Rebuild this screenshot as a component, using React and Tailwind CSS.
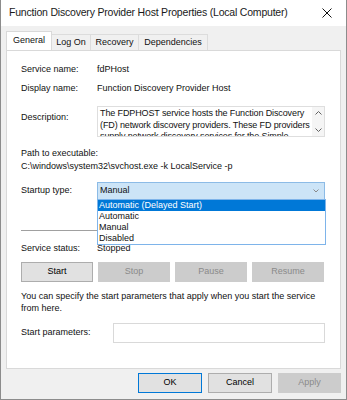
import React from "react";

const font = "font-['Liberation_Sans',Arial,sans-serif]";

function Tab({ label, active, w }) {
  if (active) {
    return (
      <div className={`relative z-10 h-[19px] -mb-px flex items-center justify-center bg-white border border-[#d9d9d9] border-b-0 ${w}`}>
        <span className="-mt-[1px]">{label}</span>
      </div>
    );
  }
  return (
    <div className={`h-[16px] mt-[3px] flex items-center justify-center bg-[#f0f0f0] border border-[#dcdcdc] border-b-0 -ml-px ${w}`}>
      {label}
    </div>
  );
}

function Btn({ label, disabled, primary, w = "w-[72px]" }) {
  let cls = "bg-[#e1e1e1] border-[#adadad] text-black";
  if (disabled) cls = "bg-[#cccccc] border-[#cccccc] text-[#8a8a8a]";
  if (primary) cls = "bg-[#e1e1e1] border-[#0078d7] text-black";
  return (
    <div className={`h-[20px] ${w} border flex items-center justify-center ${cls}`}>
      {label}
    </div>
  );
}

export default function App() {
  return (
    <div className={`w-[347px] h-[400px] bg-[#f0f0f0] border border-[#8c8c8c] border-t-0 flex flex-col text-[9px] text-[#111] whitespace-nowrap ${font} overflow-hidden`}>
      {/* title bar */}
      <div className="h-[26px] bg-white flex items-center pl-[8px] pr-[10px] shrink-0 text-[10.5px] tracking-[-0.2px]">
        <span className="flex-1 text-[#1a1a1a]">
          Function Discovery Provider Host Properties (Local Computer)
        </span>
        <svg width="10" height="10" viewBox="0 0 10 10" className="mr-[4px]">
          <path d="M0.5 0.5L9.5 9.5M9.5 0.5L0.5 9.5" stroke="#111" strokeWidth="1" />
        </svg>
      </div>

      {/* tabs */}
      <div className="flex items-start pl-[5px] mt-[5px] h-[19px] shrink-0">
        <Tab label="General" active w="w-[46px]" />
        <Tab label="Log On" w="w-[40px]" />
        <Tab label="Recovery" w="w-[49px]" />
        <Tab label="Dependencies" w="w-[70px]" />
      </div>

      {/* panel */}
      <div className="relative mx-[5px] h-[319px] bg-white border border-[#d9d9d9] pl-[14px] pr-[15px] shrink-0">
        <div className="mt-[11px] h-[16px] flex items-center">
          <span className="w-[76px]">Service name:</span>
          <span>fdPHost</span>
        </div>
        <div className="mt-[3px] h-[16px] flex items-center">
          <span className="w-[76px]">Display name:</span>
          <span>Function Discovery Provider Host</span>
        </div>
        <div className="mt-[9px] flex items-start">
          <span className="w-[76px] pt-[5px]">Description:</span>
          <div className="flex-1 min-w-0 h-[31px] border border-[#dedede] flex overflow-hidden">
            <div className="flex-1 min-w-0 pl-[2px] leading-[11.5px] pt-[1px] overflow-hidden tracking-[-0.12px]">
              <div>The FDPHOST service hosts the Function Discovery</div>
              <div>(FD) network discovery providers. These FD providers</div>
              <div>supply network discovery services for the Simple</div>
            </div>
            <div className="w-[12px] shrink-0 flex flex-col items-center justify-between py-[4px] bg-[#f5f5f5]">
              <svg width="7" height="4" viewBox="0 0 7 4">
                <path d="M0.5 3.5L3.5 0.5L6.5 3.5" stroke="#606060" fill="none" />
              </svg>
              <svg width="7" height="4" viewBox="0 0 7 4">
                <path d="M0.5 0.5L3.5 3.5L6.5 0.5" stroke="#606060" fill="none" />
              </svg>
            </div>
          </div>
        </div>
        <div className="mt-[10px] leading-[13px]">Path to executable:</div>
        <div className="leading-[13px]">C:\windows\system32\svchost.exe -k LocalService -p</div>
        <div className="mt-[9px] flex items-center">
          <span className="w-[76px]">Startup type:</span>
          <div className="flex-1 h-[18px] bg-[#cce4f7] border border-[#8cbbe6] flex items-center pl-[2px] pr-[5px]">
            <span className="flex-1">Manual</span>
            <svg width="6" height="4" viewBox="0 0 6 4">
              <path d="M0.5 0.5L3 3L5.5 0.5" stroke="#8a8a8a" fill="none" />
            </svg>
          </div>
        </div>
        <div className="mt-[30px] h-px bg-[#a0a0a0]" />
        <div className="mt-[10px] h-[15px] flex items-center">
          <span className="w-[76px]">Service status:</span>
          <span>Stopped</span>
        </div>
        <div className="mt-[6px] flex gap-[5px]">
          <Btn label="Start" />
          <Btn label="Stop" disabled />
          <Btn label="Pause" disabled />
          <Btn label="Resume" disabled />
        </div>
        <div className="mt-[8px] leading-[12px]">
          <div>You can specify the start parameters that apply when you start the service</div>
          <div>from here.</div>
        </div>
        <div className="mt-[9px] flex items-center">
          <span className="w-[92px]">Start parameters:</span>
          <div className="flex-1 h-[20px] border border-[#d9d9d9] bg-white" />
        </div>

        {/* open dropdown list */}
        <div className="absolute left-[90px] top-[148px] w-[229px] h-[46px] bg-white border border-[#7eb4ea] leading-[11px] z-20">
          <div className="h-[11px] bg-[#0078d7] text-white pl-[1px] flex items-center">Automatic (Delayed Start)</div>
          <div className="h-[11px] pl-[1px] flex items-center">Automatic</div>
          <div className="h-[11px] pl-[1px] flex items-center">Manual</div>
          <div className="h-[11px] pl-[1px] flex items-center">Disabled</div>
        </div>
      </div>

      {/* dialog buttons */}
      <div className="mt-[4px] flex justify-end gap-[6px] pr-[5px]">
        <Btn label="OK" primary w="w-[64px]" />
        <Btn label="Cancel" w="w-[64px]" />
        <Btn label="Apply" disabled w="w-[63px]" />
      </div>
    </div>
  );
}
